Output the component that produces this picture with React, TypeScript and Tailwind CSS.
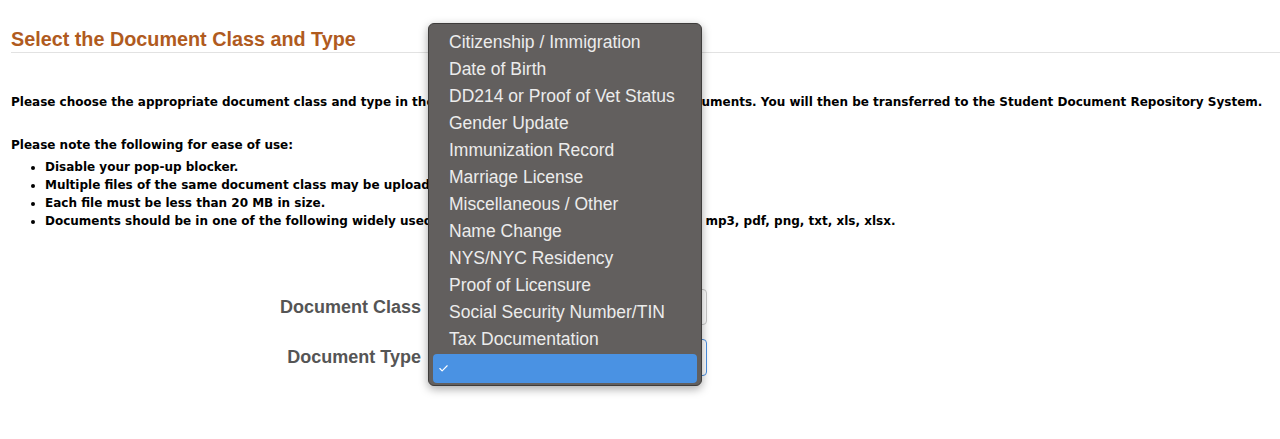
import { Check } from 'lucide-react'

const docTypes = [
    'Citizenship / Immigration',
    'Date of Birth',
    'DD214 or Proof of Vet Status',
    'Gender Update',
    'Immunization Record',
    'Marriage License',
    'Miscellaneous / Other',
    'Name Change',
    'NYS/NYC Residency',
    'Proof of Licensure',
    'Social Security Number/TIN',
    'Tax Documentation',
]

const notes = [
    'Disable your pop-up blocker.',
    'Multiple files of the same document class may be uploaded.',
    'Each file must be less than 20 MB in size.',
    'Documents should be in one of the following widely used formats: html, doc, docx, gif, jpg, jpeg, mp3, pdf, png, txt, xls, xlsx.',
]

export default function App() {
    return (
        <div className="relative min-h-[439px] bg-white font-['Liberation_Sans',Arial,sans-serif]">
            {/* Header */}
            <div className="pl-[11px] pt-[28px]">
                <h1 className="text-[19.8px] leading-[22px] font-bold text-[#b05b1e]">
                    Select the Document Class and Type
                </h1>
                <div className="mt-[2px] h-px bg-[#e2e2e2]" />
            </div>

            {/* Instructions */}
            <div className="pl-[11px] pt-[40px] font-['DejaVu_Sans',Verdana,sans-serif] text-[12px] leading-[18px] font-bold text-black">
                <p>
                    Please choose the appropriate document class and type in the drop-down menus below to upload documents. You will then be transferred to the Student Document Repository System.
                </p>
                <p className="mt-[25px]">Please note the following for ease of use:</p>
                <ul className="mt-[4px] list-disc pl-[34px]">
                    {notes.map((n) => (
                        <li key={n}>{n}</li>
                    ))}
                </ul>
            </div>

            {/* Form */}
            <div className="mt-[59px] flex flex-col gap-[14px]">
                <div className="flex items-center">
                    <label className="w-[422px] pr-[1px] text-right text-[18px] font-bold text-[#555]">Document Class</label>
                    <div className="ml-[8px] h-[36px] w-[277px] rounded-[4px] border border-[#c9c9c9] bg-white" />
                </div>
                <div className="flex items-center">
                    <label className="w-[422px] pr-[1px] text-right text-[18px] font-bold text-[#555]">Document Type</label>
                    <div className="ml-[8px] h-[37px] w-[277px] rounded-[4px] border border-[#4a8ee0] bg-white" />
                </div>
            </div>

            {/* Open native select menu */}
            <div className="absolute left-[428px] top-[23px] w-[274px] rounded-[6px] border border-[#3e3c3b] bg-[#625f5e] px-[4px] pt-[5px] pb-[2px] shadow-[0_3px_10px_rgba(0,0,0,0.35)]">
                {docTypes.map((t) => (
                    <div key={t} className="h-[27px] pl-[16px] text-[17.5px] leading-[27px] text-[#ececec]">
                        {t}
                    </div>
                ))}
                <div className="mt-[1px] flex h-[29px] items-center rounded-[4px] bg-[#4a92e3] pl-[5px]">
                    <Check className="h-[11px] w-[11px] text-white" strokeWidth={2.5} />
                </div>
            </div>
        </div>
    )
}
